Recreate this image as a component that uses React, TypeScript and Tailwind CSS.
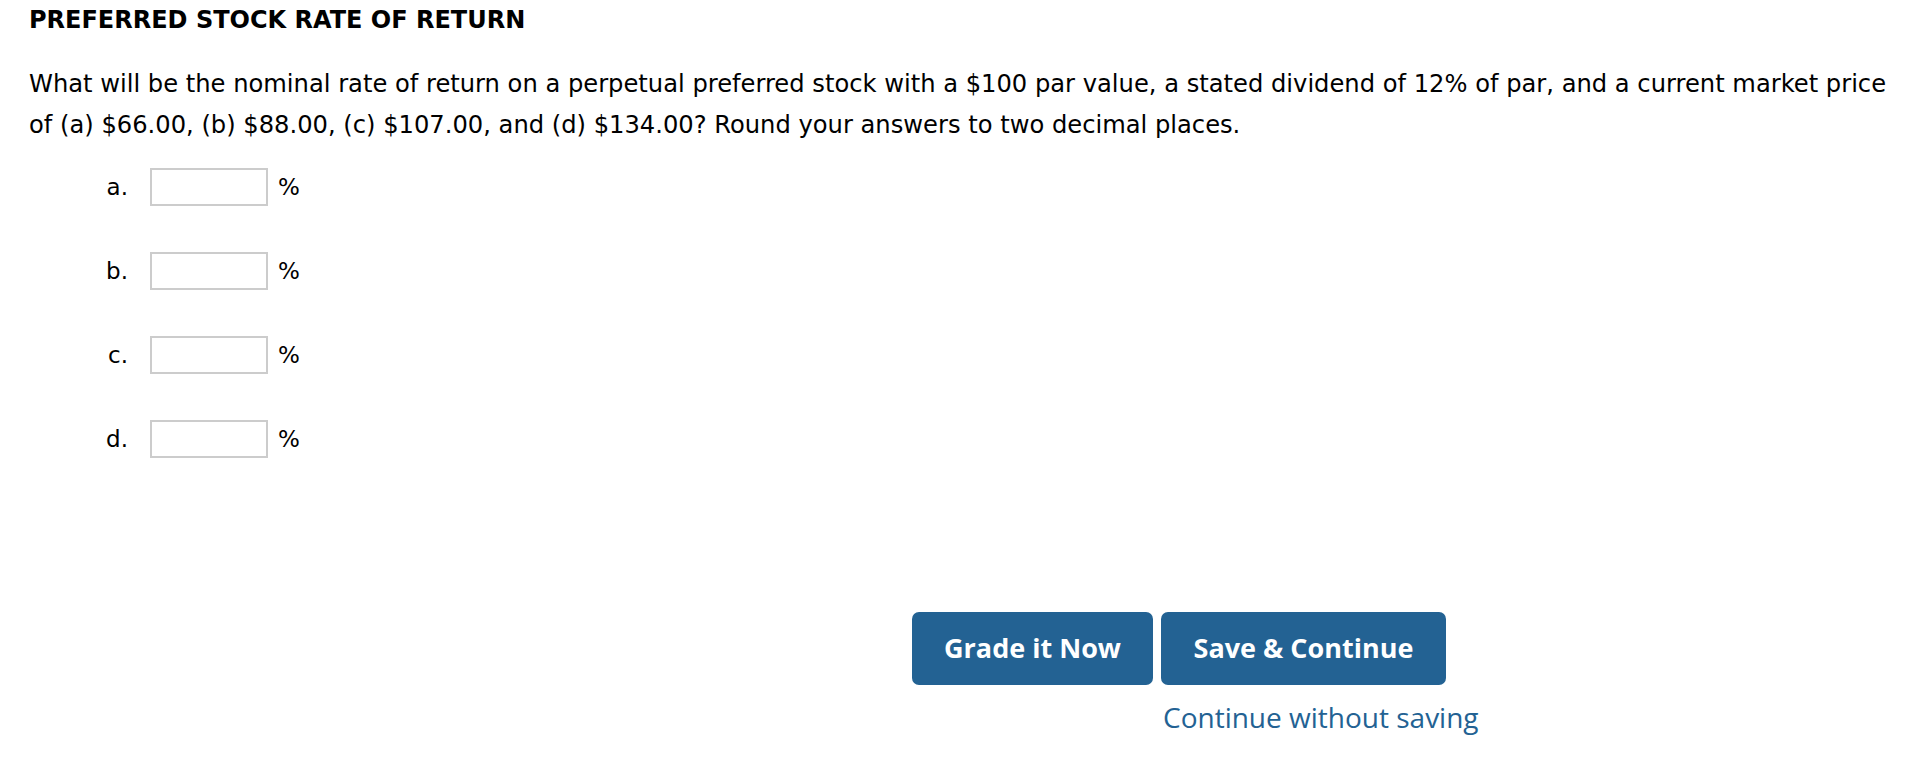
const inputs = ['a', 'b', 'c', 'd'];

export default function App() {
  return (
    <div className="min-h-screen bg-white text-black" style={{ fontFamily: 'Verdana, "DejaVu Sans", sans-serif' }}>
      <div className="pl-[29px] pr-[20px] pt-[5px]">
        <h1 className="text-[24px] font-bold leading-[30px]">PREFERRED STOCK RATE OF RETURN</h1>
        <p className="mt-[29px] text-[24.2px] leading-[41px]">
          What will be the nominal rate of return on a perpetual preferred stock with a $100 par value, a stated dividend of 12% of par, and a current market price of (a) $66.00, (b) $88.00, (c) $107.00, and (d) $134.00? Round your answers to two decimal places.
        </p>

        <div className="mt-[22px] flex flex-col gap-[46px]">
          {inputs.map((k) => (
            <div key={k} className="flex items-center">
              <span className="mr-[22px] w-[99px] text-right text-[23px]">{k}.</span>
              <input
                type="text"
                className="h-[38px] w-[118px] border-2 border-[#cccccc] bg-white outline-none"
              />
              <span className="ml-[10px] text-[23px]">%</span>
            </div>
          ))}
        </div>

        <div className="mt-[154px] flex pl-[883px]" style={{ fontFamily: '"Open Sans", sans-serif' }}>
          <button className="h-[73px] w-[241px] rounded-[7px] bg-[#236293] text-[27px] font-bold text-white">
            Grade it Now
          </button>
          <div className="ml-[8px] flex flex-col">
            <button className="h-[73px] w-[285px] rounded-[7px] bg-[#236293] text-[27px] font-bold text-white">
              Save &amp; Continue
            </button>
            <a href="#" className="mt-[11px] pl-[2px] text-[28px] text-[#236293]">
              Continue without saving
            </a>
          </div>
        </div>
      </div>
    </div>
  );
}
